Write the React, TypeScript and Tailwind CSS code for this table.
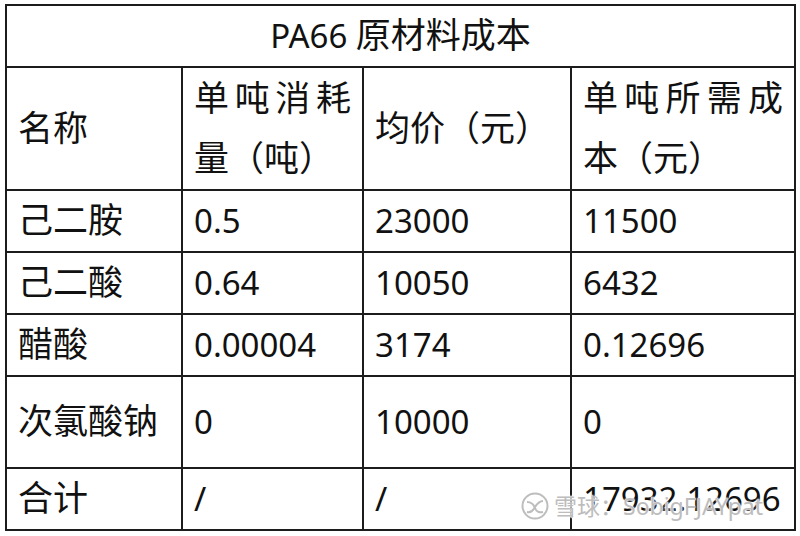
import React from "react"

const rows = [
  { name: "己二胺", qty: "0.5", price: "23000", cost: "11500", h: "h-[62px]" },
  { name: "己二酸", qty: "0.64", price: "10050", cost: "6432", h: "h-[62px]" },
  { name: "醋酸", qty: "0.00004", price: "3174", cost: "0.12696", h: "h-[62px]" },
  { name: "次氯酸钠", qty: "0", price: "10000", cost: "0", h: "h-[92px]" },
  { name: "合计", qty: "/", price: "/", cost: "17932.12696", h: "h-[62px]" },
]

const cell = "border-2 border-[#1c1c1c] px-[11px] py-0 align-middle leading-[60px]"

// CJK glyphs in the source render a bit bigger than the latin ones
function T({ s }: { s: string }) {
  const parts = s.split(/([\u3000-\u9fff\uff00-\uffef]+)/).filter(Boolean)
  return (
    <>
      {parts.map((p, i) =>
        /[\u3000-\u9fff\uff00-\uffef]/.test(p) ? (
          <span key={i} className="text-[35px] leading-[40px]">{p}</span>
        ) : (
          <span key={i}>{p}</span>
        )
      )}
    </>
  )
}

export default function App() {
  return (
    <div
      className="relative w-[800px] h-[536px] bg-white text-[#111] overflow-hidden"
      style={{ fontFamily: '"Noto Sans", "Noto Sans CJK SC", sans-serif' }}
    >
      <table className="absolute left-[5px] top-[4px] w-[789px] border-collapse table-fixed text-[33px]">
        <colgroup>
          <col className="w-[176px]" />
          <col className="w-[181px]" />
          <col className="w-[208px]" />
          <col className="w-[224px]" />
        </colgroup>
        <tbody>
          <tr className="h-[62px]">
            <td colSpan={4} className={cell + " text-center"}><T s="PA66 原材料成本" /></td>
          </tr>
          <tr className="h-[123px]">
            <td className={cell + " text-left"}><T s="名称" /></td>
            <td className={cell + " text-justify"}><T s="单吨消耗量（吨）" /></td>
            <td className={cell + " text-left"}><T s="均价（元）" /></td>
            <td className={cell + " text-justify"}><T s="单吨所需成本（元）" /></td>
          </tr>
          {rows.map((r) => (
            <tr key={r.name} className={r.h}>
              <td className={cell + " text-left"}><T s={r.name} /></td>
              <td className={cell + " text-left"}>{r.qty}</td>
              <td className={cell + " text-left"}>{r.price}</td>
              <td className={cell + " text-left"}>{r.cost}</td>
            </tr>
          ))}
        </tbody>
      </table>

      {/* watermark */}
      <div
        className="absolute left-[521px] top-[492px] flex items-center gap-[5px] text-[23px] leading-none text-[#bdbdbd]"
        style={{ textShadow: "0 0 2px #fff, 0 0 2px #fff, 0 0 1px #fff" }}
      >
        <svg width="28" height="28" viewBox="0 0 28 28" fill="none" stroke="#bdbdbd" strokeWidth="2">
          <circle cx="14" cy="14" r="12.5" />
          <path d="M6 10 C10 10 13 13 14 16 C15 19 18 21 22 20" />
          <path d="M22 9 C18 9 16 12 14 15 C12 19 10 21 6 20" />
        </svg>
        <span>雪球：SobigFJAYpat</span>
      </div>
    </div>
  )
}
